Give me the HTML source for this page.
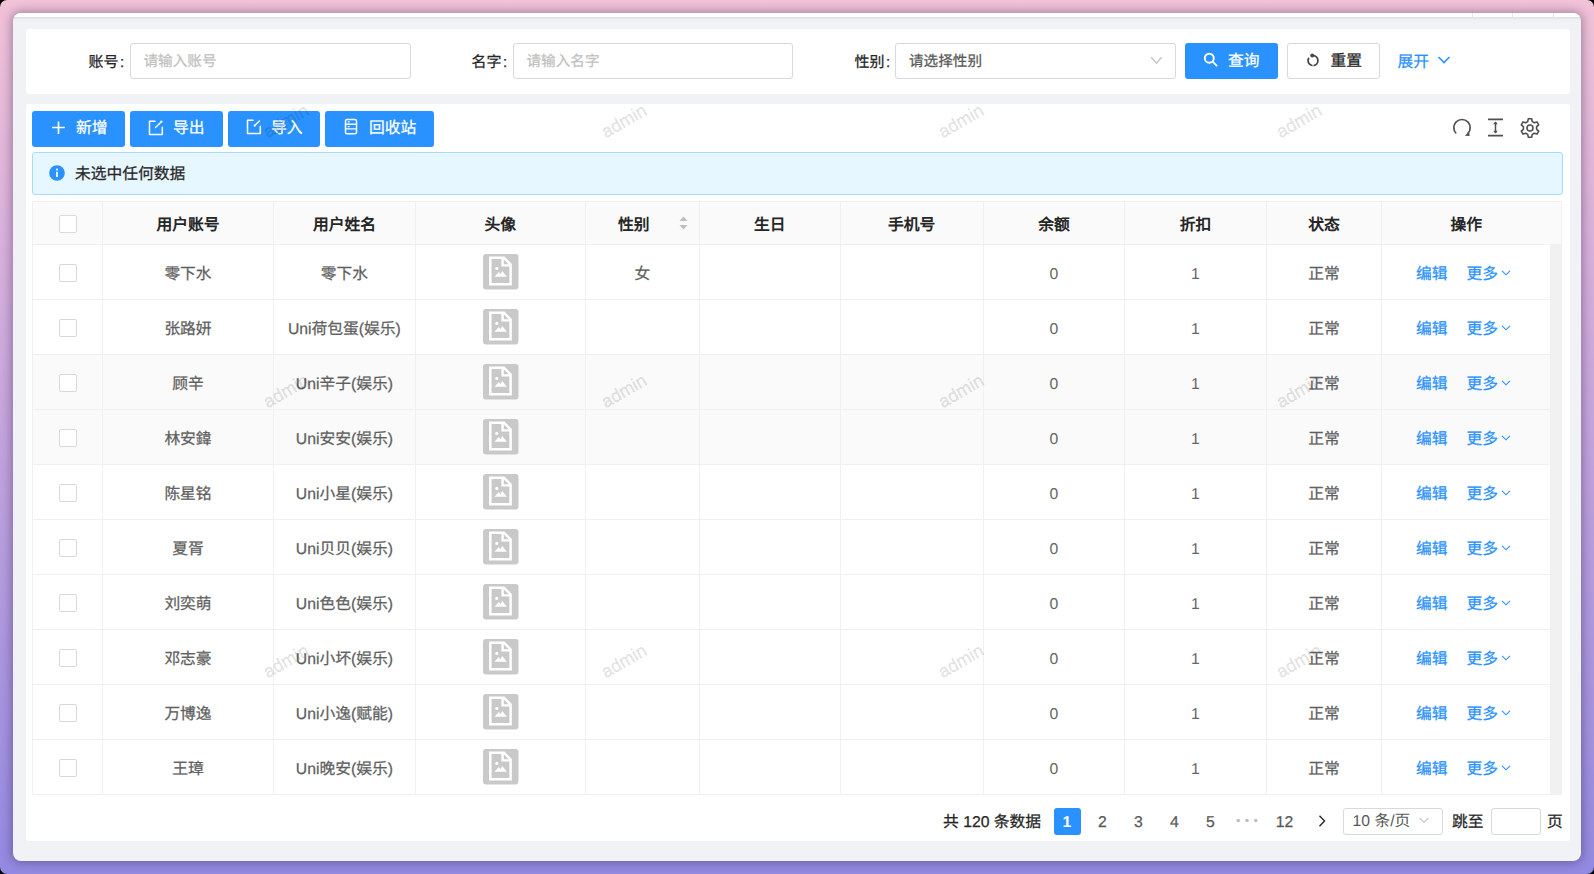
<!DOCTYPE html>
<html lang="zh-CN">
<head>
<meta charset="utf-8">
<style>
*{box-sizing:border-box;margin:0;padding:0}
html,body{width:1594px;height:874px;overflow:hidden;background:#000}
body{font-family:"Liberation Sans",sans-serif;font-size:15.75px;color:#595959;position:relative}
.bg{position:absolute;left:0;top:0;width:1594px;height:874px;border-radius:7px;background:linear-gradient(180deg,#f1c2d8 0%,#c5a5dc 47%,#9389e1 100%);overflow:hidden}
.win{position:absolute;left:13px;top:13px;width:1568px;height:848px;border-radius:8px;background:#f0f2f5;box-shadow:0 0 10px 2px rgba(40,20,60,.35);overflow:hidden}
.tabs{position:absolute;left:0;top:0;width:100%;height:4px;background:#fff;box-shadow:0 1px 3px rgba(0,0,0,.10)}
.tabs i{position:absolute;top:0;width:1px;height:4px;background:#e8e8e8}
.card{position:absolute;background:#fff;border-radius:3px}
.abs{position:absolute}
.lbl{position:absolute;color:#262626;white-space:nowrap;line-height:20px}
.inp{position:absolute;height:36px;border:1px solid #d9d9d9;border-radius:3px;background:#fff;color:#bfbfbf;padding-left:13px;line-height:36px;font-size:14.6px;white-space:nowrap}
.btn{position:absolute;height:36px;border-radius:3px;background:#2a92fe;color:#fff;line-height:36px;white-space:nowrap}
.wm{position:absolute;color:rgba(0,0,0,.11);font-size:18px;-webkit-text-stroke:0.6px rgba(0,0,0,.09);transform:rotate(-30deg);transform-origin:center;white-space:nowrap;pointer-events:none;z-index:50}
.hl{position:absolute;left:32px;height:1px;background:#f0f0f0}
.vl{position:absolute;width:1px;background:#f0f0f0}
.th{position:absolute;width:120px;text-align:center;color:#262626;font-weight:bold;line-height:20px;white-space:nowrap}
.td{position:absolute;width:160px;text-align:center;color:#606060;line-height:20px;white-space:nowrap}
.lk{position:absolute;color:#2a92fe;line-height:20px;white-space:nowrap}
.cb{position:absolute;width:18px;height:18px;border:1px solid #d9d9d9;border-radius:2px;background:#fff}
.pg{position:absolute;top:813px;width:27px;text-align:center;color:#595959;line-height:20px;white-space:nowrap}
body{text-rendering:geometricPrecision}
.lbl,.td,.lk,.pg,.btn span,.inp{-webkit-text-stroke:0.25px currentColor}
</style>
</head>
<body>
<div class="bg"></div>
<div class="win">
  <div class="tabs"><i style="left:1459px"></i><i style="left:1499px"></i><i style="left:1540px"></i></div>
  <!-- search card -->
  <div class="card" style="left:12.5px;top:16px;width:1544px;height:65px">
  </div>
  <!-- table card -->
  <div class="card" style="left:12.5px;top:91px;width:1544px;height:736.5px">
  </div>
</div>

<!-- search form -->
<div class="lbl" style="left:88.5px;top:52.5px;font-size:15px">账号<span style="margin-left:1.5px">:</span></div>
<div class="inp" style="left:129.5px;top:42.5px;width:281px">请输入账号</div>
<div class="lbl" style="left:471.5px;top:52.5px;font-size:15px">名字<span style="margin-left:1.5px">:</span></div>
<div class="inp" style="left:512.5px;top:42.5px;width:280px">请输入名字</div>
<div class="lbl" style="left:854.5px;top:52.5px;font-size:15px">性别<span style="margin-left:1.5px">:</span></div>
<div class="inp" style="left:895px;top:42.5px;width:280.5px;color:#595959">请选择性别
  <svg class="abs" style="left:253px;top:12px" width="14" height="10" viewBox="0 0 14 10"><path d="M2.2 1.3 L7.4 7.3 L12.6 1.3" fill="none" stroke="#c4c4c4" stroke-width="1.4"/></svg>
</div>
<div class="btn" style="left:1184.5px;top:42.5px;width:93px">
  <svg class="abs" style="left:11.5px;top:5.5px" width="28" height="24" viewBox="0 0 28 24"><circle cx="13.3" cy="10.2" r="4.5" fill="none" stroke="#fff" stroke-width="1.9"/><path d="M16.7 13.6 L20.6 17.6" stroke="#fff" stroke-width="1.9" stroke-linecap="round"/></svg>
  <span class="abs" style="left:43.5px;top:1.5px">查询</span>
</div>
<div class="btn" style="left:1286.5px;top:42.5px;width:93px;background:#fff;border:1px solid #d9d9d9;color:#262626;line-height:34px">
  <svg class="abs" style="left:10.5px;top:4.5px" width="28" height="24" viewBox="0 0 28 24"><path d="M14.56 7.62 A5 5 0 0 1 15.52 17.57 M14.48 17.57 A5 5 0 0 1 10.9 9.73" fill="none" stroke="#444" stroke-width="1.8"/><circle cx="14.2" cy="7.5" r="1.9" fill="#444"/></svg>
  <span class="abs" style="left:43px;top:1.5px">重置</span>
</div>
<div class="lbl" style="left:1397.5px;top:52.5px;color:#2a92fe">展开</div>
<svg class="abs" style="left:1437px;top:55px" width="14" height="10" viewBox="0 0 14 10"><path d="M1.5 2 L7 7.5 L12.5 2" fill="none" stroke="#2a92fe" stroke-width="1.6"/></svg>
<!-- toolbar -->
<div class="btn" style="left:32px;top:110.5px;width:93px">
  <svg class="abs" style="left:18.5px;top:9px" width="15" height="15" viewBox="0 0 15 15"><path d="M7.5 1.5 V14 M1.2 7.5 H13.8" stroke="#fff" stroke-width="1.7"/></svg>
  <span class="abs" style="left:44px;top:0.5px">新增</span>
</div>
<div class="btn" style="left:130px;top:110.5px;width:92.5px">
  <svg class="abs" style="left:18px;top:9px" width="16" height="16" viewBox="0 0 16 16"><path d="M7 1.3 H1.5 V14.6 H14.3 V7.2" fill="none" stroke="#fff" stroke-width="1.5" stroke-linecap="round" stroke-linejoin="round"/><path d="M7.5 7.4 L13.4 1.7" stroke="#fff" stroke-width="1.4" stroke-linecap="round"/><circle cx="13.4" cy="1.7" r="1.1" fill="#fff"/></svg>
  <span class="abs" style="left:43px;top:0.5px">导出</span>
</div>
<div class="btn" style="left:227.5px;top:110.5px;width:92.5px">
  <svg class="abs" style="left:18.5px;top:8.8px" width="16" height="16" viewBox="0 0 16 16"><path d="M7 1.3 H1.5 V14.6 H14.3 V7.2" fill="none" stroke="#fff" stroke-width="1.5" stroke-linecap="round" stroke-linejoin="round"/><path d="M8.7 6.6 L13.4 1.9" stroke="#fff" stroke-width="1.4" stroke-linecap="round"/><circle cx="8.7" cy="6.6" r="1.1" fill="#fff"/></svg>
  <span class="abs" style="left:43.5px;top:0.5px">导入</span>
</div>
<div class="btn" style="left:324.5px;top:110.5px;width:109px">
  <svg class="abs" style="left:19.5px;top:7.5px" width="14" height="18" viewBox="0 0 14 18"><rect x="1.5" y="1.5" width="11" height="14.3" rx="1.6" fill="none" stroke="#fff" stroke-width="1.5"/><path d="M1.5 6.3 H12.5 M1.5 10.9 H12.5" stroke="#fff" stroke-width="1.4"/><path d="M3.8 3.9 H5.6 M3.8 8.6 H5.6" stroke="#fff" stroke-width="1.1"/></svg>
  <span class="abs" style="left:44.5px;top:0.5px">回收站</span>
</div>
<!-- right icons -->
<svg class="abs" style="left:1451px;top:117px" width="22" height="22" viewBox="0 0 22 22"><path d="M5.2 16.5 A8.2 8.2 0 1 1 16.8 16.5" fill="none" stroke="#505050" stroke-width="1.7"/><path d="M13.8 18.8 L18.3 14.3 L18.6 19 Z" fill="#505050"/></svg>
<svg class="abs" style="left:1486px;top:117px" width="19" height="21" viewBox="0 0 19 21"><path d="M2 2.3 H17 M2 18.7 H17" stroke="#505050" stroke-width="1.8"/><path d="M9.5 5 V16" stroke="#505050" stroke-width="1.5"/><path d="M7.2 7.3 L9.5 4.5 L11.8 7.3 Z M7.2 13.7 L9.5 16.5 L11.8 13.7 Z" fill="#505050"/></svg>
<svg class="abs" style="left:1519px;top:116.5px" width="22" height="22" viewBox="0 0 22 22"><path fill="none" stroke="#505050" stroke-width="1.6" stroke-linejoin="round" d="M9.3 1.8 H12.7 L13.3 4.6 L15.3 5.8 L18 4.9 L19.7 7.8 L17.6 9.7 V12.3 L19.7 14.2 L18 17.1 L15.3 16.2 L13.3 17.4 L12.7 20.2 H9.3 L8.7 17.4 L6.7 16.2 L4 17.1 L2.3 14.2 L4.4 12.3 V9.7 L2.3 7.8 L4 4.9 L6.7 5.8 L8.7 4.6 Z"/><circle cx="11" cy="11" r="3" fill="none" stroke="#505050" stroke-width="1.6"/></svg>
<!-- alert -->
<div class="abs" style="left:32px;top:151.5px;width:1530.5px;height:43px;background:#e6f7ff;border:1.2px solid #a6dcfd;border-radius:3px"></div>
<svg class="abs" style="left:49px;top:165px" width="16" height="16" viewBox="0 0 16 16"><circle cx="8" cy="8" r="7.8" fill="#2a92fe"/><rect x="7.1" y="6.8" width="1.8" height="5.2" fill="#fff"/><circle cx="8" cy="4.6" r="1.05" fill="#fff"/></svg>
<div class="lbl" style="left:75px;top:165px;color:#262626">未选中任何数据</div>
<div class="abs" style="left:32px;top:201.5px;width:1529.5px;height:43.5px;background:#fafafa"></div>
<div class="abs" style="left:32px;top:354.5px;width:1519px;height:55px;background:#fafafa"></div>
<div class="abs" style="left:32px;top:409.5px;width:1519px;height:55px;background:#fafafa"></div>
<div class="abs" style="left:1550.9px;top:245px;width:10.6px;height:550px;background:#f1f1f1"></div>
<div class="hl" style="top:201px;width:1529.5px"></div>
<div class="hl" style="top:244.0px;width:1529.5px"></div>
<div class="hl" style="top:299.0px;width:1519px"></div>
<div class="hl" style="top:354.0px;width:1519px"></div>
<div class="hl" style="top:409.0px;width:1519px"></div>
<div class="hl" style="top:464.0px;width:1519px"></div>
<div class="hl" style="top:519.0px;width:1519px"></div>
<div class="hl" style="top:574.0px;width:1519px"></div>
<div class="hl" style="top:629.0px;width:1519px"></div>
<div class="hl" style="top:684.0px;width:1519px"></div>
<div class="hl" style="top:739.0px;width:1519px"></div>
<div class="hl" style="top:794.0px;width:1519px"></div>
<div class="vl" style="left:31.5px;top:201px;height:594px"></div>
<div class="vl" style="left:1561px;top:201px;height:594px"></div>
<div class="vl" style="left:102.1px;top:201px;height:594px"></div>
<div class="vl" style="left:272.9px;top:201px;height:594px"></div>
<div class="vl" style="left:414.8px;top:201px;height:594px"></div>
<div class="vl" style="left:584.7px;top:201px;height:594px"></div>
<div class="vl" style="left:698.9px;top:201px;height:594px"></div>
<div class="vl" style="left:839.7px;top:201px;height:594px"></div>
<div class="vl" style="left:982.7px;top:201px;height:594px"></div>
<div class="vl" style="left:1124.1px;top:201px;height:594px"></div>
<div class="vl" style="left:1266.0px;top:201px;height:594px"></div>
<div class="vl" style="left:1380.9px;top:201px;height:594px"></div>
<div class="vl" style="left:1550.4px;top:245px;height:550px"></div>
<div class="th" style="left:128.0px;top:215.5px">用户账号</div>
<div class="th" style="left:284.4px;top:215.5px">用户姓名</div>
<div class="th" style="left:440.2px;top:215.5px">头像</div>
<div class="th" style="left:573.7px;top:215.5px">性别</div>
<div class="th" style="left:709.8px;top:215.5px">生日</div>
<div class="th" style="left:851.7px;top:215.5px">手机号</div>
<div class="th" style="left:993.9px;top:215.5px">余额</div>
<div class="th" style="left:1135.5px;top:215.5px">折扣</div>
<div class="th" style="left:1264.0px;top:215.5px">状态</div>
<div class="th" style="left:1406.2px;top:215.5px">操作</div>
<svg class="abs" style="left:678px;top:215px" width="11" height="16" viewBox="0 0 11 16"><path d="M1.5 6 L5.5 1.5 L9.5 6 Z M1.5 10 L5.5 14.5 L9.5 10 Z" fill="#bfbfbf"/></svg>
<div class="cb" style="left:58.5px;top:214.5px"></div>
<div class="cb" style="left:58.5px;top:263.5px"></div>
<div class="td" style="left:108.0px;top:264.5px">零下水</div>
<div class="td" style="left:264.4px;top:264.5px">零下水</div>
<svg class="abs" style="left:483px;top:254.4px" width="35.5" height="35.5" viewBox="0 0 35.5 35.5"><rect x="0" y="0" width="35.5" height="35.5" rx="3" fill="#c9c9c9"/><path d="M7.3 3.7 H20.9 L27.6 10.4 V30.3 H7.3 Z" fill="none" stroke="#fff" stroke-width="2.5" stroke-linejoin="miter"/><path d="M19.6 3.5 V11.4 H27.8" fill="none" stroke="#fff" stroke-width="2.4"/><circle cx="13.8" cy="14.4" r="1.55" fill="#fff"/><path d="M11.4 22.8 L15.9 18.1 L17.3 20.3 L19.3 17 L23.8 22.8 Z" fill="#fff"/></svg>
<div class="td" style="left:562.3px;top:264.5px">女</div>
<div class="td" style="left:973.9px;top:264.5px;-webkit-text-stroke:0;color:#666">0</div>
<div class="td" style="left:1115.5px;top:264.5px;-webkit-text-stroke:0;color:#666">1</div>
<div class="td" style="left:1244.0px;top:264.5px">正常</div>
<div class="lk" style="left:1416px;top:264.5px">编辑</div>
<div class="lk" style="left:1466.5px;top:264.5px">更多</div>
<svg class="abs" style="left:1500px;top:269px" width="12" height="8" viewBox="0 0 12 8"><path d="M2 1.8 L6 5.8 L10 1.8" fill="none" stroke="#2a92fe" stroke-width="1.1"/></svg>
<div class="cb" style="left:58.5px;top:318.5px"></div>
<div class="td" style="left:108.0px;top:319.5px">张路妍</div>
<div class="td" style="left:264.4px;top:319.5px">Uni荷包蛋(娱乐)</div>
<svg class="abs" style="left:483px;top:309.4px" width="35.5" height="35.5" viewBox="0 0 35.5 35.5"><rect x="0" y="0" width="35.5" height="35.5" rx="3" fill="#c9c9c9"/><path d="M7.3 3.7 H20.9 L27.6 10.4 V30.3 H7.3 Z" fill="none" stroke="#fff" stroke-width="2.5" stroke-linejoin="miter"/><path d="M19.6 3.5 V11.4 H27.8" fill="none" stroke="#fff" stroke-width="2.4"/><circle cx="13.8" cy="14.4" r="1.55" fill="#fff"/><path d="M11.4 22.8 L15.9 18.1 L17.3 20.3 L19.3 17 L23.8 22.8 Z" fill="#fff"/></svg>
<div class="td" style="left:973.9px;top:319.5px;-webkit-text-stroke:0;color:#666">0</div>
<div class="td" style="left:1115.5px;top:319.5px;-webkit-text-stroke:0;color:#666">1</div>
<div class="td" style="left:1244.0px;top:319.5px">正常</div>
<div class="lk" style="left:1416px;top:319.5px">编辑</div>
<div class="lk" style="left:1466.5px;top:319.5px">更多</div>
<svg class="abs" style="left:1500px;top:324px" width="12" height="8" viewBox="0 0 12 8"><path d="M2 1.8 L6 5.8 L10 1.8" fill="none" stroke="#2a92fe" stroke-width="1.1"/></svg>
<div class="cb" style="left:58.5px;top:373.5px"></div>
<div class="td" style="left:108.0px;top:374.5px">顾辛</div>
<div class="td" style="left:264.4px;top:374.5px">Uni辛子(娱乐)</div>
<svg class="abs" style="left:483px;top:364.4px" width="35.5" height="35.5" viewBox="0 0 35.5 35.5"><rect x="0" y="0" width="35.5" height="35.5" rx="3" fill="#c9c9c9"/><path d="M7.3 3.7 H20.9 L27.6 10.4 V30.3 H7.3 Z" fill="none" stroke="#fff" stroke-width="2.5" stroke-linejoin="miter"/><path d="M19.6 3.5 V11.4 H27.8" fill="none" stroke="#fff" stroke-width="2.4"/><circle cx="13.8" cy="14.4" r="1.55" fill="#fff"/><path d="M11.4 22.8 L15.9 18.1 L17.3 20.3 L19.3 17 L23.8 22.8 Z" fill="#fff"/></svg>
<div class="td" style="left:973.9px;top:374.5px;-webkit-text-stroke:0;color:#666">0</div>
<div class="td" style="left:1115.5px;top:374.5px;-webkit-text-stroke:0;color:#666">1</div>
<div class="td" style="left:1244.0px;top:374.5px">正常</div>
<div class="lk" style="left:1416px;top:374.5px">编辑</div>
<div class="lk" style="left:1466.5px;top:374.5px">更多</div>
<svg class="abs" style="left:1500px;top:379px" width="12" height="8" viewBox="0 0 12 8"><path d="M2 1.8 L6 5.8 L10 1.8" fill="none" stroke="#2a92fe" stroke-width="1.1"/></svg>
<div class="cb" style="left:58.5px;top:428.5px"></div>
<div class="td" style="left:108.0px;top:429.5px">林安鍏</div>
<div class="td" style="left:264.4px;top:429.5px">Uni安安(娱乐)</div>
<svg class="abs" style="left:483px;top:419.4px" width="35.5" height="35.5" viewBox="0 0 35.5 35.5"><rect x="0" y="0" width="35.5" height="35.5" rx="3" fill="#c9c9c9"/><path d="M7.3 3.7 H20.9 L27.6 10.4 V30.3 H7.3 Z" fill="none" stroke="#fff" stroke-width="2.5" stroke-linejoin="miter"/><path d="M19.6 3.5 V11.4 H27.8" fill="none" stroke="#fff" stroke-width="2.4"/><circle cx="13.8" cy="14.4" r="1.55" fill="#fff"/><path d="M11.4 22.8 L15.9 18.1 L17.3 20.3 L19.3 17 L23.8 22.8 Z" fill="#fff"/></svg>
<div class="td" style="left:973.9px;top:429.5px;-webkit-text-stroke:0;color:#666">0</div>
<div class="td" style="left:1115.5px;top:429.5px;-webkit-text-stroke:0;color:#666">1</div>
<div class="td" style="left:1244.0px;top:429.5px">正常</div>
<div class="lk" style="left:1416px;top:429.5px">编辑</div>
<div class="lk" style="left:1466.5px;top:429.5px">更多</div>
<svg class="abs" style="left:1500px;top:434px" width="12" height="8" viewBox="0 0 12 8"><path d="M2 1.8 L6 5.8 L10 1.8" fill="none" stroke="#2a92fe" stroke-width="1.1"/></svg>
<div class="cb" style="left:58.5px;top:483.5px"></div>
<div class="td" style="left:108.0px;top:484.5px">陈星铭</div>
<div class="td" style="left:264.4px;top:484.5px">Uni小星(娱乐)</div>
<svg class="abs" style="left:483px;top:474.4px" width="35.5" height="35.5" viewBox="0 0 35.5 35.5"><rect x="0" y="0" width="35.5" height="35.5" rx="3" fill="#c9c9c9"/><path d="M7.3 3.7 H20.9 L27.6 10.4 V30.3 H7.3 Z" fill="none" stroke="#fff" stroke-width="2.5" stroke-linejoin="miter"/><path d="M19.6 3.5 V11.4 H27.8" fill="none" stroke="#fff" stroke-width="2.4"/><circle cx="13.8" cy="14.4" r="1.55" fill="#fff"/><path d="M11.4 22.8 L15.9 18.1 L17.3 20.3 L19.3 17 L23.8 22.8 Z" fill="#fff"/></svg>
<div class="td" style="left:973.9px;top:484.5px;-webkit-text-stroke:0;color:#666">0</div>
<div class="td" style="left:1115.5px;top:484.5px;-webkit-text-stroke:0;color:#666">1</div>
<div class="td" style="left:1244.0px;top:484.5px">正常</div>
<div class="lk" style="left:1416px;top:484.5px">编辑</div>
<div class="lk" style="left:1466.5px;top:484.5px">更多</div>
<svg class="abs" style="left:1500px;top:489px" width="12" height="8" viewBox="0 0 12 8"><path d="M2 1.8 L6 5.8 L10 1.8" fill="none" stroke="#2a92fe" stroke-width="1.1"/></svg>
<div class="cb" style="left:58.5px;top:538.5px"></div>
<div class="td" style="left:108.0px;top:539.5px">夏胥</div>
<div class="td" style="left:264.4px;top:539.5px">Uni贝贝(娱乐)</div>
<svg class="abs" style="left:483px;top:529.4px" width="35.5" height="35.5" viewBox="0 0 35.5 35.5"><rect x="0" y="0" width="35.5" height="35.5" rx="3" fill="#c9c9c9"/><path d="M7.3 3.7 H20.9 L27.6 10.4 V30.3 H7.3 Z" fill="none" stroke="#fff" stroke-width="2.5" stroke-linejoin="miter"/><path d="M19.6 3.5 V11.4 H27.8" fill="none" stroke="#fff" stroke-width="2.4"/><circle cx="13.8" cy="14.4" r="1.55" fill="#fff"/><path d="M11.4 22.8 L15.9 18.1 L17.3 20.3 L19.3 17 L23.8 22.8 Z" fill="#fff"/></svg>
<div class="td" style="left:973.9px;top:539.5px;-webkit-text-stroke:0;color:#666">0</div>
<div class="td" style="left:1115.5px;top:539.5px;-webkit-text-stroke:0;color:#666">1</div>
<div class="td" style="left:1244.0px;top:539.5px">正常</div>
<div class="lk" style="left:1416px;top:539.5px">编辑</div>
<div class="lk" style="left:1466.5px;top:539.5px">更多</div>
<svg class="abs" style="left:1500px;top:544px" width="12" height="8" viewBox="0 0 12 8"><path d="M2 1.8 L6 5.8 L10 1.8" fill="none" stroke="#2a92fe" stroke-width="1.1"/></svg>
<div class="cb" style="left:58.5px;top:593.5px"></div>
<div class="td" style="left:108.0px;top:594.5px">刘奕萌</div>
<div class="td" style="left:264.4px;top:594.5px">Uni色色(娱乐)</div>
<svg class="abs" style="left:483px;top:584.4px" width="35.5" height="35.5" viewBox="0 0 35.5 35.5"><rect x="0" y="0" width="35.5" height="35.5" rx="3" fill="#c9c9c9"/><path d="M7.3 3.7 H20.9 L27.6 10.4 V30.3 H7.3 Z" fill="none" stroke="#fff" stroke-width="2.5" stroke-linejoin="miter"/><path d="M19.6 3.5 V11.4 H27.8" fill="none" stroke="#fff" stroke-width="2.4"/><circle cx="13.8" cy="14.4" r="1.55" fill="#fff"/><path d="M11.4 22.8 L15.9 18.1 L17.3 20.3 L19.3 17 L23.8 22.8 Z" fill="#fff"/></svg>
<div class="td" style="left:973.9px;top:594.5px;-webkit-text-stroke:0;color:#666">0</div>
<div class="td" style="left:1115.5px;top:594.5px;-webkit-text-stroke:0;color:#666">1</div>
<div class="td" style="left:1244.0px;top:594.5px">正常</div>
<div class="lk" style="left:1416px;top:594.5px">编辑</div>
<div class="lk" style="left:1466.5px;top:594.5px">更多</div>
<svg class="abs" style="left:1500px;top:599px" width="12" height="8" viewBox="0 0 12 8"><path d="M2 1.8 L6 5.8 L10 1.8" fill="none" stroke="#2a92fe" stroke-width="1.1"/></svg>
<div class="cb" style="left:58.5px;top:648.5px"></div>
<div class="td" style="left:108.0px;top:649.5px">邓志豪</div>
<div class="td" style="left:264.4px;top:649.5px">Uni小坏(娱乐)</div>
<svg class="abs" style="left:483px;top:639.4px" width="35.5" height="35.5" viewBox="0 0 35.5 35.5"><rect x="0" y="0" width="35.5" height="35.5" rx="3" fill="#c9c9c9"/><path d="M7.3 3.7 H20.9 L27.6 10.4 V30.3 H7.3 Z" fill="none" stroke="#fff" stroke-width="2.5" stroke-linejoin="miter"/><path d="M19.6 3.5 V11.4 H27.8" fill="none" stroke="#fff" stroke-width="2.4"/><circle cx="13.8" cy="14.4" r="1.55" fill="#fff"/><path d="M11.4 22.8 L15.9 18.1 L17.3 20.3 L19.3 17 L23.8 22.8 Z" fill="#fff"/></svg>
<div class="td" style="left:973.9px;top:649.5px;-webkit-text-stroke:0;color:#666">0</div>
<div class="td" style="left:1115.5px;top:649.5px;-webkit-text-stroke:0;color:#666">1</div>
<div class="td" style="left:1244.0px;top:649.5px">正常</div>
<div class="lk" style="left:1416px;top:649.5px">编辑</div>
<div class="lk" style="left:1466.5px;top:649.5px">更多</div>
<svg class="abs" style="left:1500px;top:654px" width="12" height="8" viewBox="0 0 12 8"><path d="M2 1.8 L6 5.8 L10 1.8" fill="none" stroke="#2a92fe" stroke-width="1.1"/></svg>
<div class="cb" style="left:58.5px;top:703.5px"></div>
<div class="td" style="left:108.0px;top:704.5px">万博逸</div>
<div class="td" style="left:264.4px;top:704.5px">Uni小逸(赋能)</div>
<svg class="abs" style="left:483px;top:694.4px" width="35.5" height="35.5" viewBox="0 0 35.5 35.5"><rect x="0" y="0" width="35.5" height="35.5" rx="3" fill="#c9c9c9"/><path d="M7.3 3.7 H20.9 L27.6 10.4 V30.3 H7.3 Z" fill="none" stroke="#fff" stroke-width="2.5" stroke-linejoin="miter"/><path d="M19.6 3.5 V11.4 H27.8" fill="none" stroke="#fff" stroke-width="2.4"/><circle cx="13.8" cy="14.4" r="1.55" fill="#fff"/><path d="M11.4 22.8 L15.9 18.1 L17.3 20.3 L19.3 17 L23.8 22.8 Z" fill="#fff"/></svg>
<div class="td" style="left:973.9px;top:704.5px;-webkit-text-stroke:0;color:#666">0</div>
<div class="td" style="left:1115.5px;top:704.5px;-webkit-text-stroke:0;color:#666">1</div>
<div class="td" style="left:1244.0px;top:704.5px">正常</div>
<div class="lk" style="left:1416px;top:704.5px">编辑</div>
<div class="lk" style="left:1466.5px;top:704.5px">更多</div>
<svg class="abs" style="left:1500px;top:709px" width="12" height="8" viewBox="0 0 12 8"><path d="M2 1.8 L6 5.8 L10 1.8" fill="none" stroke="#2a92fe" stroke-width="1.1"/></svg>
<div class="cb" style="left:58.5px;top:758.5px"></div>
<div class="td" style="left:108.0px;top:759.5px">王璋</div>
<div class="td" style="left:264.4px;top:759.5px">Uni晚安(娱乐)</div>
<svg class="abs" style="left:483px;top:749.4px" width="35.5" height="35.5" viewBox="0 0 35.5 35.5"><rect x="0" y="0" width="35.5" height="35.5" rx="3" fill="#c9c9c9"/><path d="M7.3 3.7 H20.9 L27.6 10.4 V30.3 H7.3 Z" fill="none" stroke="#fff" stroke-width="2.5" stroke-linejoin="miter"/><path d="M19.6 3.5 V11.4 H27.8" fill="none" stroke="#fff" stroke-width="2.4"/><circle cx="13.8" cy="14.4" r="1.55" fill="#fff"/><path d="M11.4 22.8 L15.9 18.1 L17.3 20.3 L19.3 17 L23.8 22.8 Z" fill="#fff"/></svg>
<div class="td" style="left:973.9px;top:759.5px;-webkit-text-stroke:0;color:#666">0</div>
<div class="td" style="left:1115.5px;top:759.5px;-webkit-text-stroke:0;color:#666">1</div>
<div class="td" style="left:1244.0px;top:759.5px">正常</div>
<div class="lk" style="left:1416px;top:759.5px">编辑</div>
<div class="lk" style="left:1466.5px;top:759.5px">更多</div>
<svg class="abs" style="left:1500px;top:764px" width="12" height="8" viewBox="0 0 12 8"><path d="M2 1.8 L6 5.8 L10 1.8" fill="none" stroke="#2a92fe" stroke-width="1.1"/></svg><!-- pagination -->
<div class="lbl" style="left:943px;top:813px;color:#262626">共 120 条数据</div>
<div class="abs" style="left:1053.5px;top:807.5px;width:27px;height:27px;background:#2a92fe;border-radius:3px;color:#fff;text-align:center;line-height:29px;font-weight:bold">1</div>
<div class="pg" style="left:1089px">2</div>
<div class="pg" style="left:1125px">3</div>
<div class="pg" style="left:1161px">4</div>
<div class="pg" style="left:1197px">5</div>
<svg class="abs" style="left:1234px;top:816px" width="26" height="9" viewBox="0 0 26 9"><circle cx="4.2" cy="4.5" r="1.8" fill="#bfbfbf"/><circle cx="13" cy="4.5" r="1.8" fill="#bfbfbf"/><circle cx="21.8" cy="4.5" r="1.8" fill="#bfbfbf"/></svg>
<div class="pg" style="left:1271px">12</div>
<svg class="abs" style="left:1315px;top:813.5px" width="14" height="14" viewBox="0 0 14 14"><path d="M4.5 1.8 L9.5 7 L4.5 12.2" fill="none" stroke="#262626" stroke-width="1.4"/></svg>
<div class="abs" style="left:1342.5px;top:807.5px;width:100.5px;height:27px;border:1px solid #d9d9d9;border-radius:3px;line-height:25px;padding-left:9px;color:#595959;white-space:nowrap">10 条/页</div>
<svg class="abs" style="left:1418px;top:816px" width="12" height="9" viewBox="0 0 12 9"><path d="M1.5 1.8 L6 6.3 L10.5 1.8" fill="none" stroke="#bfbfbf" stroke-width="1.1"/></svg>
<div class="lbl" style="left:1452px;top:813px;color:#262626">跳至</div>
<div class="abs" style="left:1490.5px;top:807.5px;width:50px;height:27px;border:1px solid #d9d9d9;border-radius:3px"></div>
<div class="lbl" style="left:1547px;top:813px;color:#262626">页</div>
<div class="wm" style="left:256px;top:110px;width:60px;height:22px;line-height:22px;text-align:center">admin</div>
<div class="wm" style="left:593.5px;top:110px;width:60px;height:22px;line-height:22px;text-align:center">admin</div>
<div class="wm" style="left:931px;top:110px;width:60px;height:22px;line-height:22px;text-align:center">admin</div>
<div class="wm" style="left:1268.5px;top:110px;width:60px;height:22px;line-height:22px;text-align:center">admin</div>
<div class="wm" style="left:256px;top:380px;width:60px;height:22px;line-height:22px;text-align:center">admin</div>
<div class="wm" style="left:593.5px;top:380px;width:60px;height:22px;line-height:22px;text-align:center">admin</div>
<div class="wm" style="left:931px;top:380px;width:60px;height:22px;line-height:22px;text-align:center">admin</div>
<div class="wm" style="left:1268.5px;top:380px;width:60px;height:22px;line-height:22px;text-align:center">admin</div>
<div class="wm" style="left:256px;top:650px;width:60px;height:22px;line-height:22px;text-align:center">admin</div>
<div class="wm" style="left:593.5px;top:650px;width:60px;height:22px;line-height:22px;text-align:center">admin</div>
<div class="wm" style="left:931px;top:650px;width:60px;height:22px;line-height:22px;text-align:center">admin</div>
<div class="wm" style="left:1268.5px;top:650px;width:60px;height:22px;line-height:22px;text-align:center">admin</div>
</body>
</html>
